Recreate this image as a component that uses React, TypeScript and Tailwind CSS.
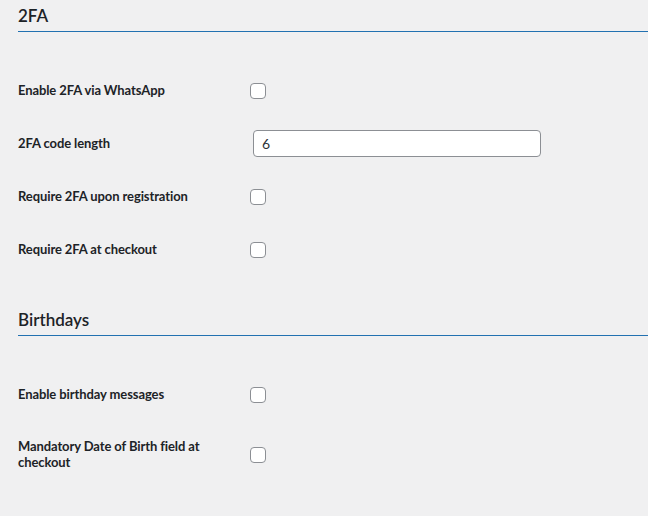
import React from 'react'

function Checkbox() {
  return (
    <span className="block w-4 h-4 rounded-[4px] border border-[#8c8f94] bg-white" />
  )
}

function Row({ label, h = 'h-[53px]', children }: { label: string; h?: string; children: React.ReactNode }) {
  return (
    <div className={`flex items-center ${h}`}>
      <div className="w-[200px] pb-[1px] text-[13px] font-bold tracking-[-0.1px] leading-[16px] text-[#1d2327]">
        {label}
      </div>
      <div className="pl-[32px] flex items-center">{children}</div>
    </div>
  )
}

function SectionTitle({ title }: { title: string }) {
  return (
    <h2 className="h-[27px] pb-[4px] border-b border-[#2271b1] text-[17px] font-semibold leading-[22px] text-[#1d2327]">
      {title}
    </h2>
  )
}

export default function App() {
  return (
    <div
      className="min-h-[516px] bg-[#f0f0f1] pl-[18px] pt-[5px]"
      style={{ fontFamily: 'Lato, "Noto Sans", sans-serif' }}
    >
      <SectionTitle title="2FA" />
      <div className="pt-[32px]">
        <Row label="Enable 2FA via WhatsApp">
          <Checkbox />
        </Row>
        <Row label="2FA code length">
          <div className="ml-[3px] w-[288px] h-[27px] rounded-[4px] border border-[#8c8f94] bg-white flex items-center px-[8px] text-[14px] text-[#2c3338]">
            6
          </div>
        </Row>
        <Row label="Require 2FA upon registration">
          <Checkbox />
        </Row>
        <Row label="Require 2FA at checkout">
          <Checkbox />
        </Row>
      </div>
      <div className="mt-[33px]">
        <SectionTitle title="Birthdays" />
      </div>
      <div className="pt-[32px]">
        <Row label="Enable birthday messages">
          <Checkbox />
        </Row>
        <Row label="Mandatory Date of Birth field at checkout" h="h-[67px]">
          <Checkbox />
        </Row>
      </div>
    </div>
  )
}
